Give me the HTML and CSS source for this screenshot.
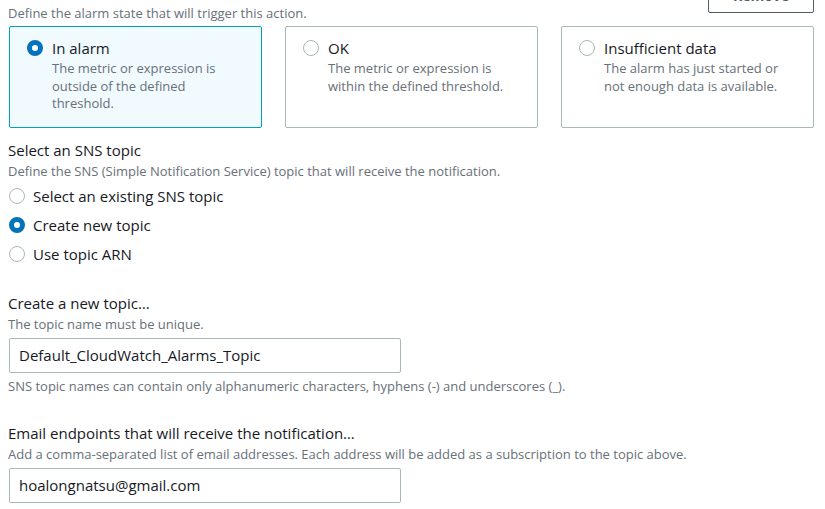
FILE: index.html
```html
<!DOCTYPE html>
<html>
<head>
<meta charset="utf-8">
<link rel="stylesheet" href="styles.css">
</head>
<body>
<div class="page">
  <div class="head">
    <div class="head-text">
      <div class="desc">Define the alarm state that will trigger this action.</div>
    </div>
    <button class="btn">Remove</button>
  </div>

  <div class="tiles">
    <label class="tile selected">
      <span class="radio on"></span>
      <span class="tile-body">
        <span class="tile-label">In alarm</span>
        <span class="tile-desc">The metric or expression is outside of the defined threshold.</span>
      </span>
    </label>
    <label class="tile">
      <span class="radio"></span>
      <span class="tile-body">
        <span class="tile-label">OK</span>
        <span class="tile-desc">The metric or expression is within the defined threshold.</span>
      </span>
    </label>
    <label class="tile">
      <span class="radio"></span>
      <span class="tile-body">
        <span class="tile-label">Insufficient data</span>
        <span class="tile-desc">The alarm has just started or not enough data is available.</span>
      </span>
    </label>
  </div>

  <div class="section">
    <div class="label">Select an SNS topic</div>
    <div class="desc">Define the SNS (Simple Notification Service) topic that will receive the notification.</div>
    <div class="radios">
      <div class="opt"><span class="radio"></span><span>Select an existing SNS topic</span></div>
      <div class="opt"><span class="radio on"></span><span>Create new topic</span></div>
      <div class="opt"><span class="radio"></span><span>Use topic ARN</span></div>
    </div>
  </div>

  <div class="field first">
    <div class="label">Create a new topic…</div>
    <div class="desc">The topic name must be unique.</div>
    <div class="input">Default_CloudWatch_Alarms_Topic</div>
    <div class="desc hint">SNS topic names can contain only alphanumeric characters, hyphens (-) and underscores (_).</div>
  </div>

  <div class="field">
    <div class="label">Email endpoints that will receive the notification…</div>
    <div class="desc">Add a comma-separated list of email addresses. Each address will be added as a subscription to the topic above.</div>
    <div class="input">hoalongnatsu@gmail.com</div>
  </div>
</div>
</body>
</html>
```

FILE: styles.css
```css
html, body {
  margin: 0;
  padding: 0;
  background: #ffffff;
}
body {
  font-family: "Open Sans", "Liberation Sans", sans-serif;
  color: #16191f;
  overflow: hidden;
}
.page {
  margin-top: -19px;
  padding: 0 11px 0 8px;
}
.head {
  display: flex;
  justify-content: space-between;
  align-items: flex-start;
}
.head-text {
  padding-top: 22px;
}
.desc {
  font-size: 13px;
  line-height: 20px;
  color: #687078;
}
.btn {
  width: 106px;
  height: 32px;
  border: 1px solid #545b64;
  border-radius: 2px;
  background: #ffffff;
  color: #545b64;
  font-family: inherit;
  font-size: 14px;
  font-weight: 700;
  padding: 0 0 4px;
}
.tiles {
  display: grid;
  grid-template-columns: repeat(3, 1fr);
  gap: 23px;
  margin-top: 3px;
  padding-left: 1px;
}
.tile {
  display: flex;
  align-items: flex-start;
  gap: 9px;
  border: 1px solid #aab7b8;
  border-radius: 2px;
  padding: 11px 14px 14px 17px;
  min-height: 75px;
}
.tile.selected {
  background: #f1faff;
  border-color: #00a1c9;
}
.radio {
  flex: none;
  width: 16px;
  height: 16px;
  box-sizing: border-box;
  border: 1.5px solid #aab7b8;
  border-radius: 50%;
  background: #ffffff;
}
.radio.on {
  border: 5px solid #0073bb;
}
.tile .radio {
  margin-top: 2px;
}
.tile-body {
  display: flex;
  flex-direction: column;
}
.tile-label {
  font-size: 15px;
  line-height: 21px;
}
.tile-desc {
  font-size: 13px;
  line-height: 17.5px;
  color: #687078;
  margin-top: 1px;
}
.section {
  margin-top: 11px;
}
.label {
  font-size: 15px;
  line-height: 22px;
}
.radios {
  display: flex;
  flex-direction: column;
  gap: 7px;
  margin-top: 4px;
}
.opt {
  display: flex;
  align-items: center;
  gap: 8px;
  font-size: 15px;
  line-height: 22px;
  padding-left: 1px;
}
.field {
  margin-top: 26px;
}
.field.first {
  margin-top: 27px;
}
.field .desc:first-of-type {
  margin-top: 1px;
}
.input {
  box-sizing: border-box;
  width: 392px;
  height: 35px;
  margin: 4px 0 0 1px;
  padding: 0 9px;
  border: 1px solid #aab7b8;
  border-radius: 2px;
  font-size: 15px;
  line-height: 33px;
  color: #16191f;
}
.hint {
  margin-top: 3px;
}
```
